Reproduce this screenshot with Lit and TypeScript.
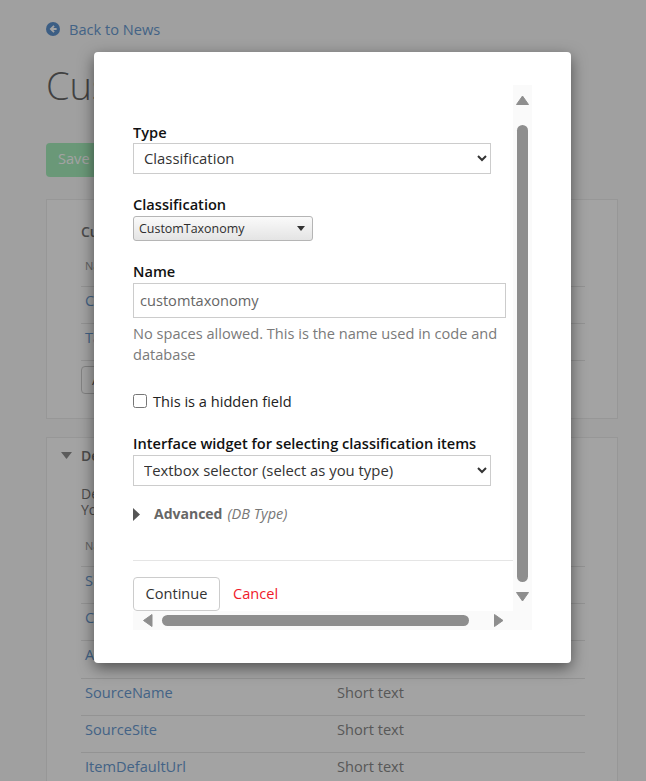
import { LitElement, html, css } from "lit";
import { customElement } from "lit/decorators.js";

@customElement("app-root")
export class AppRoot extends LitElement {
  static styles = css`
    :host { display: block; height: 781px; overflow: hidden; position: relative; background: #fafafa;
      font-family: "Open Sans", sans-serif; font-size: 14.6px; color: #444; line-height: 21px; }
    * { box-sizing: border-box; }
    a { color: #6a9bd2; text-decoration: none; }
    .page { padding: 19px 28px 0 46px; }
    .back { display: flex; align-items: center; gap: 9px; height: 20px; }
    .back svg { display: block; }
    h1 { margin: 10px 0 0; font-size: 38px; font-weight: 300; line-height: 72px; height: 72px; color: #666; white-space: nowrap; }
    .save { margin-top: 22px; width: 120px; height: 34px; background: #a6eebc; border-radius: 4px; color: #fff; padding: 5px 12px; }
    .panel { background: #fff; border: 1px solid #ececec; margin-top: 22px; padding: 0 32px 0 34px; }
    .p1 { height: 220px; padding-top: 22px; }
    .p2 { margin-top: 18px; padding-top: 7px; height: 420px; }
    .ptitle { font-weight: 600; color: #777; height: 20px; line-height: 20px; font-size: 14px; }
    .colh { font-size: 11px; color: #999; height: 44px; padding: 14px 0 0 4px; line-height: 20px; }
    .p2 .colh { height: 48px; padding-top: 18px; }
    .row { display: grid; grid-template-columns: 252px 1fr; border-top: 1px solid #e6e6e6; height: 37px; padding: 3px 0 0 4px; line-height: 21px; }
    .p2 .row { height: 37.2px; }
    .row span { color: #8a8a8a; }
    .rows { border-bottom: 1px solid #e6e6e6; }
    .add { margin-top: 5px; width: 120px; height: 28px; border: 1px solid #ccc; border-radius: 4px; padding: 2px 10px; color: #666; }
    .p2head { display: flex; align-items: center; gap: 9px; margin-left: -20px; height: 20px; font-weight: 600; color: #777; font-size: 14px; }
    .desc { margin-top: 21px; line-height: 16px; color: #777; font-size: 14px; }
    .overlay { position: absolute; inset: 0; background: rgba(0,0,0,.36); padding: 52px 0 0 94px; }
    .modal { width: 477px; height: 611px; background: #fff; border-radius: 4px; box-shadow: 0 5px 15px rgba(0,0,0,.5);
      padding: 33px 39px 33px 39px; }
    .scroll { display: grid; grid-template-columns: 380px 19px; grid-template-rows: 526px 19px; width: 399px; height: 545px; }
    .content { overflow: hidden; padding-top: 38px; width: 380px; }
    .vbar { background: #fafafa; position: relative; }
    .hbar { background: #fafafa; position: relative; }
    .corner { background: #fafafa; }
    .vthumb { position: absolute; left: 4px; top: 40px; width: 11px; height: 457px; background: #8e8e8e; border-radius: 6px; }
    .hthumb { position: absolute; left: 29px; top: 4px; width: 307px; height: 11px; background: #8e8e8e; border-radius: 6px; }
    .ua { position: absolute; left: 3px; top: 10px; }
    .da { position: absolute; left: 3px; top: 507px; }
    .la { position: absolute; left: 10px; top: 3px; }
    .ra { position: absolute; left: 361px; top: 3px; }
    svg { display: block; }
    label.f { display: block; color: #111; font-weight: 600; line-height: 18px; height: 20px; white-space: nowrap; }
    select { display: block; width: 358px; height: 31px; border: 1px solid #ccc; background: #fff; color: #333; font: 14.85px "Open Sans", sans-serif; padding: 0 6px 2px; border-radius: 0; margin: 0; }
    select.gap { margin-top: 1px; }
    .f2 { margin-top: 21px; }
    .dd { width: 180px; height: 25px; margin-top: 1px; border: 1px solid #b5b5b5; border-radius: 3px; background: linear-gradient(#fafafa, #e4e4e4);
      display: flex; align-items: center; justify-content: space-between; padding: 0 7px 0 5px; font-size: 12.45px; color: #2e2e2e; }
    .f3 { margin-top: 21px; }
    input.t { display: block; width: 373px; height: 35px; border: 1px solid #ccc; padding: 0 6px 2px; font: 14.6px "Open Sans", sans-serif; color: #666; margin: 1px 0 0; outline: none; background: #fff; border-radius: 0; }
    .help { color: #7a7a7a; width: 373px; margin-top: 5px; line-height: 21px; }
    .chk { display: flex; align-items: center; gap: 6px; margin-top: 26px; height: 20px; color: #222; }
    .chk input { width: 14px; height: 14px; margin: 0; }
    .f4 { margin-top: 23px; }
    .adv { display: flex; align-items: center; margin-top: 18px; height: 20px; color: #666; padding-bottom: 2px; }
    .adv svg { margin: 2px 14px 0 0; }
    .adv b { font-weight: 700; color: #666; font-size: 14px; }
    .adv i { margin-left: 5px; color: #777; font-size: 14.5px; }
    hr { border: 0; border-top: 1px solid #e5e5e5; margin: 36px 0 0; }
    .acts { display: flex; align-items: center; gap: 13px; margin-top: 16px; }
    .btn { width: 87px; height: 34px; border: 1px solid #ccc; border-radius: 4px; background: #fff; color: #333; display: flex; align-items: center; justify-content: center; padding-bottom: 2px; }
    .cancel { color: #f01a2a; margin-top: -2px; }
  `;

  render() {
    const rows2 = [["Slug", "Short text"], ["Content", "Short text"], ["Author", "Short text"], ["SourceName", "Short text"], ["SourceSite", "Short text"], ["ItemDefaultUrl", "Short text"]];
    return html`
      <div class="page">
        <div class="back">
          <svg width="14" height="14" viewBox="0 0 14 14"><circle cx="7" cy="7" r="7" fill="#5f93cf"/><path d="M7.400 3.200 3.600 7l3.800 3.800 1.300-1.300-1.500-1.500h3.400V6H7.200l1.500-1.500z" fill="#fff"/></svg>
          <a>Back to News</a>
        </div>
        <h1>Custom fields</h1>
        <div class="save">Save changes</div>
        <div class="panel p1">
          <div class="ptitle">Custom fields</div>
          <div class="colh">Name</div>
          <div class="rows">
            <div class="row"><a>Category</a><span>Classification</span></div>
            <div class="row"><a>Tags</a><span>Classification</span></div>
          </div>
          <div class="add">Add field</div>
        </div>
        <div class="panel p2">
          <div class="p2head"><svg width="11" height="7" viewBox="0 0 11 7"><path d="M0 0h11L5.500 7z" fill="#8f8f8f"/></svg>Default fields</div>
          <div class="desc">Default fields are included in this type.<br>You can not remove them.</div>
          <div class="colh">Name</div>
          ${rows2.map(r => html`<div class="row"><a>${r[0]}</a><span>${r[1]}</span></div>`)}
        </div>
      </div>
      <div class="overlay">
        <div class="modal">
          <div class="scroll">
            <div class="content">
              <label class="f">Type</label>
              <select><option>Classification</option></select>
              <label class="f f2">Classification</label>
              <div class="dd"><span>CustomTaxonomy</span><svg width="8" height="5" viewBox="0 0 8 5"><path d="M0 0h8L4 5z" fill="#333"/></svg></div>
              <label class="f f3">Name</label>
              <input class="t" .value=${"customtaxonomy"} />
              <div class="help">No spaces allowed. This is the name used in code and database</div>
              <div class="chk"><input type="checkbox" /><span>This is a hidden field</span></div>
              <label class="f f4">Interface widget for selecting classification items</label>
              <select class="gap"><option>Textbox selector (select as you type)</option></select>
              <div class="adv"><svg width="7" height="13" viewBox="0 0 7 13"><path d="M0 0l7 6.500L0 13z" fill="#555"/></svg><b>Advanced</b><i>(DB Type)</i></div>
              <hr />
              <div class="acts"><div class="btn">Continue</div><a class="cancel">Cancel</a></div>
            </div>
            <div class="vbar">
              <svg class="ua" width="13" height="10" viewBox="0 0 13 10"><path d="M6.500 1 12.500 9.500H.5z" fill="#8e8e8e" stroke="#8e8e8e" stroke-linejoin="round"/></svg>
              <div class="vthumb"></div>
              <svg class="da" width="13" height="10" viewBox="0 0 13 10"><path d="M.5.5h12L6.500 9z" fill="#8e8e8e" stroke="#8e8e8e" stroke-linejoin="round"/></svg>
            </div>
            <div class="hbar">
              <svg class="la" width="10" height="13" viewBox="0 0 10 13"><path d="M.5 6.500 9 .5v12z" fill="#8e8e8e" stroke="#8e8e8e" stroke-linejoin="round"/></svg>
              <div class="hthumb"></div>
              <svg class="ra" width="10" height="13" viewBox="0 0 10 13"><path d="M9 6.500.5.5v12z" fill="#8e8e8e" stroke="#8e8e8e" stroke-linejoin="round"/></svg>
            </div>
            <div class="corner"></div>
          </div>
        </div>
      </div>
    `;
  }
}
